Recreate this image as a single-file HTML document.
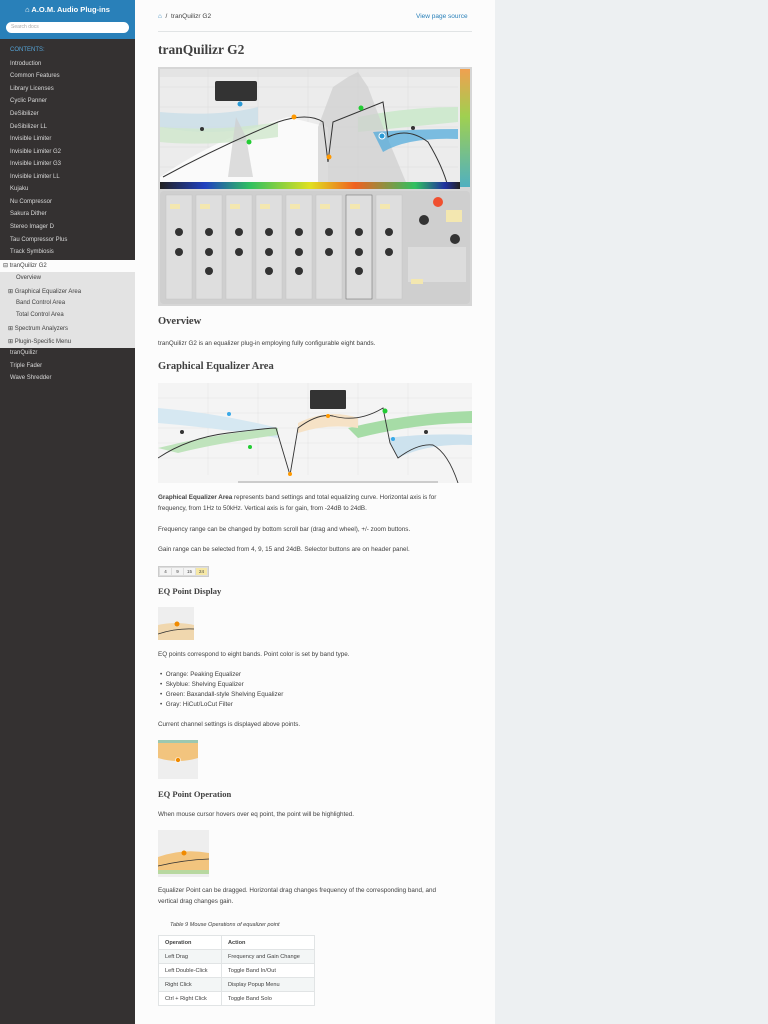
<!DOCTYPE html>
<html><head><meta charset="utf-8"><style>
*{margin:0;padding:0;box-sizing:border-box}
body{width:768px;height:1024px;background:#edf0f2;font-family:"Liberation Sans",sans-serif;position:relative;overflow:hidden;color:#404040}
.a{position:absolute;white-space:nowrap}
#side{position:absolute;left:0;top:0;width:135px;height:1024px;background:#343131}
#top{position:absolute;left:0;top:0;width:135px;height:39px;background:#2980b9}
.nav{position:absolute;left:10px;font-size:6px;color:#d9d9d9}
.sub{position:absolute;left:16px;font-size:6px;color:#404040}
#content{position:absolute;left:135px;top:0;width:360px;height:1024px;background:#fcfcfc}
.t{font-size:6.3px;color:#404040}
h1,h2,h3{font-family:"Liberation Serif",serif;font-weight:bold;color:#404040;position:absolute;white-space:nowrap}
td,th{border:1px solid #e1e4e5;padding:0 6px;height:14px;text-align:left;font-size:5.6px}
</style></head><body>
<div id="side">
<div id="top">
<div class="a" style="left:0;width:135px;text-align:center;top:5px;color:#fff;font-size:7.5px;font-weight:bold">&#8962; A.O.M. Audio Plug-ins</div>
<div class="a" style="left:6px;top:22px;width:123px;height:11px;background:#fff;border-radius:6px;font-size:5px;color:#aaa;padding:2px 5px">Search docs</div>
</div>
<div class="nav" style="top:47px;color:#55a5d9">CONTENTS:</div>
<div class="nav" style="top:61px">Introduction</div>
<div class="nav" style="top:73px">Common Features</div>
<div class="nav" style="top:86px">Library Licenses</div>
<div class="nav" style="top:98px">Cyclic Panner</div>
<div class="nav" style="top:111px">DeSibilizer</div>
<div class="nav" style="top:124px">DeSibilizer LL</div>
<div class="nav" style="top:136px">Invisible Limiter</div>
<div class="nav" style="top:149px">Invisible Limiter G2</div>
<div class="nav" style="top:161px">Invisible Limiter G3</div>
<div class="nav" style="top:174px">Invisible Limiter LL</div>
<div class="nav" style="top:186px">Kujaku</div>
<div class="nav" style="top:199px">Nu Compressor</div>
<div class="nav" style="top:211px">Sakura Dither</div>
<div class="nav" style="top:224px">Stereo Imager D</div>
<div class="nav" style="top:237px">Tau Compressor Plus</div>
<div class="nav" style="top:249px">Track Symbiosis</div>
<div class="a" style="left:0;top:260px;width:135px;height:12px;background:#fcfcfc"></div>
<div class="a" style="left:3px;top:262px;font-size:6px;color:#404040">&#8863; tranQuilizr G2</div>
<div class="a" style="left:0;top:272px;width:135px;height:76px;background:#e3e3e3"></div>
<div class="sub" style="top:275px">Overview</div>
<div class="sub" style="left:8px;top:288px">&#8862; Graphical Equalizer Area</div>
<div class="sub" style="top:300px">Band Control Area</div>
<div class="sub" style="top:312px">Total Control Area</div>
<div class="sub" style="left:8px;top:325px">&#8862; Spectrum Analyzers</div>
<div class="sub" style="left:8px;top:338px">&#8862; Plugin-Specific Menu</div>
<div class="nav" style="top:350px">tranQuilizr</div>
<div class="nav" style="top:363px">Triple Fader</div>
<div class="nav" style="top:375px">Wave Shredder</div>
</div>

<div id="content"></div>
<div class="a" style="left:158px;top:13px;font-size:6.5px;color:#404040"><span style="color:#2980b9">&#8962;</span> &nbsp;/ &nbsp;tranQuilizr G2</div>
<div class="a" style="left:416px;top:13px;font-size:6.5px;color:#2980b9">View page source</div>
<div class="a" style="left:158px;top:31px;width:314px;height:1px;background:#e1e4e5"></div>
<h1 style="left:158px;top:42px;font-size:13.5px">tranQuilizr G2</h1>

<svg class="a" style="left:158px;top:67px" width="314" height="239" viewBox="0 0 314 239">
<rect width="314" height="239" fill="#d6d6d6"/>
<rect x="2" y="2" width="300" height="118" fill="#ececec"/>
<rect x="2" y="2" width="300" height="8" fill="#e4e4e4"/>
<g stroke="#dcdcdc" stroke-width=".5">
<line x1="2" y1="20" x2="300" y2="20"/><line x1="2" y1="40" x2="300" y2="40"/><line x1="2" y1="60" x2="300" y2="60"/><line x1="2" y1="80" x2="300" y2="80"/><line x1="2" y1="100" x2="300" y2="100"/>
<line x1="50" y1="2" x2="50" y2="115"/><line x1="100" y1="2" x2="100" y2="115"/><line x1="150" y1="2" x2="150" y2="115"/><line x1="200" y1="2" x2="200" y2="115"/><line x1="250" y1="2" x2="250" y2="115"/>
</g>
<path d="M2,110 Q60,70 130,50 L170,60 L170,115 L2,115Z" fill="#fafafa"/>
<path d="M2,45 Q60,50 100,40 L100,60 Q50,70 2,60Z" fill="#c9dfe9" opacity=".8"/>
<path d="M2,60 Q60,65 120,55 L120,70 Q50,80 2,75Z" fill="#cfe7cc" opacity=".8"/>
<path d="M200,50 Q250,40 300,40 L300,55 Q250,60 200,65Z" fill="#cfe9cf"/>
<path d="M70,110 L78,50 L88,70 L95,110Z M160,120 L160,60 L175,20 L190,10 L200,5 L210,20 L225,60 L250,120Z" fill="#cfcfcf" opacity=".7"/>
<path d="M215,65 Q260,62 300,62 L300,72 Q250,70 225,85Z" fill="#4aa8dc" opacity=".7"/>
<path d="M5,110 Q60,80 120,55 Q150,45 165,55 L170,95 L175,55 Q200,45 225,35 L230,70 Q250,60 270,75 Q285,100 290,120" fill="none" stroke="#333" stroke-width="1"/>
<circle cx="82" cy="37" r="2.5" fill="#2a9ad6"/><circle cx="91" cy="75" r="2.5" fill="#2c3"/><circle cx="136" cy="50" r="2.5" fill="#f90"/><circle cx="171" cy="90" r="2.5" fill="#f90"/><circle cx="203" cy="41" r="2.5" fill="#2c3"/><circle cx="224" cy="69" r="3" fill="#2a9ad6" stroke="#fff"/><circle cx="44" cy="62" r="2" fill="#333"/><circle cx="255" cy="61" r="2" fill="#333"/>
<rect x="57" y="14" width="42" height="20" rx="2" fill="#333"/>
<rect x="302" y="2" width="10" height="118" fill="url(#m)"/>
<defs><linearGradient id="m" x1="0" y1="0" x2="0" y2="1"><stop offset="0" stop-color="#f0a050"/><stop offset=".4" stop-color="#a0d050"/><stop offset="1" stop-color="#50b0c0"/></linearGradient>
<linearGradient id="s" x1="0" x2="1"><stop offset="0" stop-color="#222"/><stop offset=".15" stop-color="#2040c0"/><stop offset=".3" stop-color="#30c060"/><stop offset=".5" stop-color="#e0e020"/><stop offset=".65" stop-color="#f06020"/><stop offset=".85" stop-color="#30c060"/><stop offset=".95" stop-color="#2030a0"/><stop offset="1" stop-color="#222"/></linearGradient></defs>
<rect x="2" y="115" width="300" height="7" fill="url(#s)"/>
<rect x="2" y="124" width="310" height="113" rx="4" fill="#cfcfcf"/>
<g fill="#dedede" stroke="#c4c4c4" stroke-width=".5">
<rect x="8" y="128" width="26" height="104"/><rect x="38" y="128" width="26" height="104"/><rect x="68" y="128" width="26" height="104"/><rect x="98" y="128" width="26" height="104"/><rect x="128" y="128" width="26" height="104"/><rect x="158" y="128" width="26" height="104"/><rect x="188" y="128" width="26" height="104" stroke="#666"/><rect x="218" y="128" width="26" height="104"/>
</g>
<g fill="#f3e7b0"><rect x="12" y="137" width="10" height="5"/><rect x="42" y="137" width="10" height="5"/><rect x="72" y="137" width="10" height="5"/><rect x="102" y="137" width="10" height="5"/><rect x="132" y="137" width="10" height="5"/><rect x="162" y="137" width="10" height="5"/><rect x="192" y="137" width="10" height="5"/><rect x="222" y="137" width="10" height="5"/></g>
<g fill="#333"><circle cx="21" cy="165" r="4"/><circle cx="51" cy="165" r="4"/><circle cx="81" cy="165" r="4"/><circle cx="111" cy="165" r="4"/><circle cx="141" cy="165" r="4"/><circle cx="171" cy="165" r="4"/><circle cx="201" cy="165" r="4"/><circle cx="231" cy="165" r="4"/>
<circle cx="21" cy="185" r="4"/><circle cx="51" cy="185" r="4"/><circle cx="81" cy="185" r="4"/><circle cx="111" cy="185" r="4"/><circle cx="141" cy="185" r="4"/><circle cx="171" cy="185" r="4"/><circle cx="201" cy="185" r="4"/><circle cx="231" cy="185" r="4"/>
<circle cx="51" cy="204" r="4"/><circle cx="111" cy="204" r="4"/><circle cx="141" cy="204" r="4"/><circle cx="201" cy="204" r="4"/><circle cx="266" cy="153" r="5"/><circle cx="297" cy="172" r="5"/></g>
<circle cx="280" cy="135" r="5" fill="#f05030"/>
<rect x="288" y="143" width="16" height="12" fill="#f3e7b0"/>
<rect x="250" y="180" width="58" height="35" fill="#dcdcdc"/>
<rect x="253" y="212" width="12" height="5" fill="#f3e7b0"/>
</svg>

<h2 style="left:158px;top:316px;font-size:10.5px">Overview</h2>
<div class="a t" style="left:158px;top:340px">tranQuilizr G2 is an equalizer plug-in employing fully configurable eight bands.</div>
<h2 style="left:158px;top:361px;font-size:10.5px">Graphical Equalizer Area</h2>

<svg class="a" style="left:158px;top:383px" width="314" height="100" viewBox="0 0 314 100">
<rect width="314" height="100" fill="#f4f4f4"/>
<g stroke="#e2e2e2" stroke-width=".5"><line x1="0" y1="15" x2="314" y2="15"/><line x1="0" y1="30" x2="314" y2="30"/><line x1="0" y1="45" x2="314" y2="45"/><line x1="0" y1="60" x2="314" y2="60"/><line x1="0" y1="75" x2="314" y2="75"/><line x1="50" y1="0" x2="50" y2="92"/><line x1="100" y1="0" x2="100" y2="92"/><line x1="150" y1="0" x2="150" y2="92"/><line x1="200" y1="0" x2="200" y2="92"/><line x1="250" y1="0" x2="250" y2="92"/></g>
<path d="M0,25 Q60,30 120,45 L120,55 Q60,45 0,40Z" fill="#d6e8f2"/>
<path d="M0,65 Q60,50 120,45 L120,52 Q60,60 20,70Z" fill="#bfe3bc"/>
<path d="M190,45 Q250,30 314,28 L314,40 Q260,40 200,55Z" fill="#a6dca6"/>
<path d="M230,55 Q270,50 314,52 L314,62 Q270,60 240,75Z" fill="#cde2ee"/>
<path d="M140,40 Q170,25 200,35 L200,45 Q170,40 140,50Z" fill="#f6e2c6"/>
<path d="M0,75 Q30,55 70,50 Q110,45 118,45 L132,92 L140,45 Q160,30 175,33 Q200,40 225,25 L232,60 L240,75 Q260,60 275,62 Q290,70 300,100" fill="none" stroke="#333" stroke-width=".9"/>
<circle cx="71" cy="31" r="2" fill="#3aa9e8"/><circle cx="92" cy="64" r="2" fill="#2c3"/><circle cx="24" cy="49" r="2" fill="#333"/><circle cx="132" cy="91" r="2" fill="#f90"/><circle cx="170" cy="33" r="2" fill="#f90"/><circle cx="227" cy="28" r="2.5" fill="#2c3"/><circle cx="235" cy="56" r="2" fill="#3aa9e8"/><circle cx="268" cy="49" r="2" fill="#333"/>
<rect x="152" y="7" width="36" height="19" rx="1" fill="#333"/>
<rect x="80" y="98" width="200" height="2" fill="#ccc"/>
</svg>

<div class="a t" style="left:158px;top:494px"><b>Graphical Equalizer Area</b> represents band settings and total equalizing curve. Horizontal axis is for</div>
<div class="a t" style="left:158px;top:505px">frequency, from 1Hz to 50kHz. Vertical axis is for gain, from -24dB to 24dB.</div>
<div class="a t" style="left:158px;top:526px">Frequency range can be changed by bottom scroll bar (drag and wheel), +/- zoom buttons.</div>
<div class="a t" style="left:158px;top:546px">Gain range can be selected from 4, 9, 15 and 24dB. Selector buttons are on header panel.</div>
<div class="a" style="left:158px;top:566px;width:51px;height:11px;background:#ddd;border:1px solid #ccc;font-size:4.5px;display:flex;padding:1px;gap:1px">
<span style="flex:1;background:#f4f4f4;text-align:center;line-height:7px">4</span><span style="flex:1;background:#f4f4f4;text-align:center;line-height:7px">9</span><span style="flex:1;background:#f4f4f4;text-align:center;line-height:7px">15</span><span style="flex:1;background:#f6e8a6;text-align:center;line-height:7px">24</span></div>

<h3 style="left:158px;top:586px;font-size:8.5px">EQ Point Display</h3>
<svg class="a" style="left:158px;top:607px" width="36" height="33"><rect width="36" height="33" fill="#eee"/><path d="M0,18 Q18,14 36,18 L36,33 L0,33Z" fill="#f0d7ae"/><path d="M0,27 Q18,21 36,22" stroke="#333" fill="none" stroke-width=".8"/><circle cx="19" cy="17" r="2.5" fill="#f08a00"/></svg>
<div class="a t" style="left:158px;top:651px">EQ points correspond to eight bands. Point color is set by band type.</div>
<div class="a t" style="left:160px;top:671px">&#8226;&nbsp; Orange: Peaking Equalizer</div>
<div class="a t" style="left:160px;top:681px">&#8226;&nbsp; Skyblue: Shelving Equalizer</div>
<div class="a t" style="left:160px;top:691px">&#8226;&nbsp; Green: Baxandall-style Shelving Equalizer</div>
<div class="a t" style="left:160px;top:701px">&#8226;&nbsp; Gray: HiCut/LoCut Filter</div>
<div class="a t" style="left:158px;top:721px">Current channel settings is displayed above points.</div>
<svg class="a" style="left:158px;top:740px" width="40" height="39"><rect width="40" height="39" fill="#eee"/><rect width="40" height="3" fill="#9cc8b0"/><path d="M0,3 L40,3 L40,18 Q20,24 0,18Z" fill="#f2c47e"/><circle cx="20" cy="20" r="2.5" fill="#f08a00" stroke="#fff" stroke-width=".6"/></svg>
<h3 style="left:158px;top:789px;font-size:8.5px">EQ Point Operation</h3>
<div class="a t" style="left:158px;top:811px">When mouse cursor hovers over eq point, the point will be highlighted.</div>
<svg class="a" style="left:158px;top:830px" width="51" height="47"><rect width="51" height="47" fill="#eee"/><path d="M0,27 Q25,18 51,23 L51,44 L0,44Z" fill="#f2c47e"/><rect y="40" width="51" height="4" fill="#b8d8a0"/><path d="M0,36 Q25,30 51,29" stroke="#333" fill="none" stroke-width=".8"/><circle cx="26" cy="23" r="2.5" fill="#f08a00"/></svg>
<div class="a t" style="left:158px;top:887px">Equalizer Point can be dragged. Horizontal drag changes frequency of the corresponding band, and</div>
<div class="a t" style="left:158px;top:898px">vertical drag changes gain.</div>
<div class="a" style="left:170px;top:922px;font-size:5.6px;font-style:italic">Table 9 Mouse Operations of equalizer point</div>
<table class="a" style="left:158px;top:935px;width:157px;border-collapse:collapse;color:#404040">
<tr style="background:#fff"><th style="width:63px">Operation</th><th>Action</th></tr>
<tr style="background:#f3f6f6"><td>Left Drag</td><td>Frequency and Gain Change</td></tr>
<tr style="background:#fff"><td>Left Double-Click</td><td>Toggle Band In/Out</td></tr>
<tr style="background:#f3f6f6"><td>Right Click</td><td>Display Popup Menu</td></tr>
<tr style="background:#fff"><td>Ctrl + Right Click</td><td>Toggle Band Solo</td></tr>
</table>
</body></html>
